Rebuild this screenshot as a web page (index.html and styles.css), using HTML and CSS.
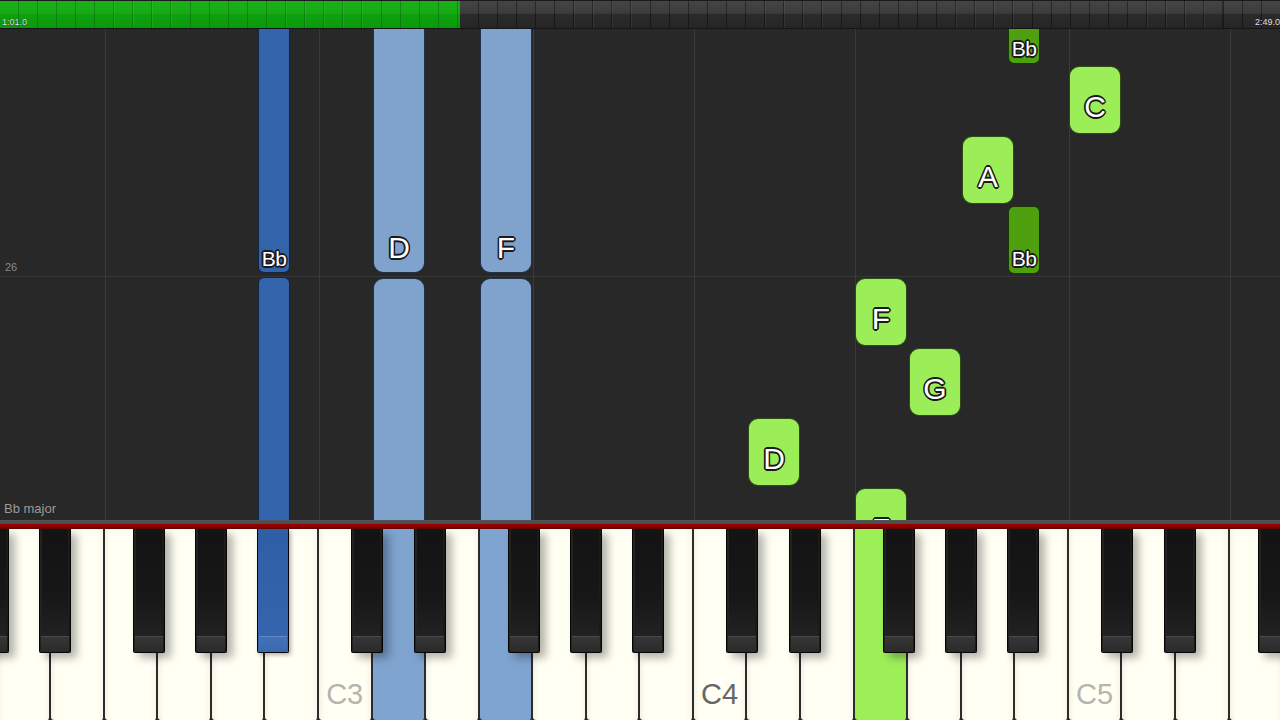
FILE: index.html
```html
<!DOCTYPE html>
<html>
<head>
<meta charset="utf-8">
<link rel="stylesheet" href="styles.css">
</head>
<body>
<div class="app">
  <div class="timeline">
    <div class="progress"></div>
    <div class="rest"></div>
    <div class="times"><span class="time">1:01.0</span><span class="time end">2:49.0</span></div>
  </div>

  <div class="roll">
    <div class="vline" style="left:105px"></div>
    <div class="vline" style="left:319px"></div>
    <div class="vline" style="left:533px"></div>
    <div class="vline" style="left:694px"></div>
    <div class="vline" style="left:855px"></div>
    <div class="vline" style="left:1069px"></div>
    <div class="vline" style="left:1230px"></div>
    <div class="hline"></div>
    <span class="measure">26</span>
    <span class="keysig">Bb major</span>

    <div class="note black lh blue-dark" style="left:258px;top:-10px;height:254px"><span>Bb</span></div>
    <div class="note black lh blue-dark" style="left:258px;top:248px;height:262px"></div>
    <div class="note white lh blue-light" style="left:373px;top:-10px;height:254px"><span>D</span></div>
    <div class="note white lh blue-light" style="left:373px;top:249px;height:262px"></div>
    <div class="note white lh blue-light" style="left:480px;top:-10px;height:254px"><span>F</span></div>
    <div class="note white lh blue-light" style="left:480px;top:249px;height:262px"></div>

    <div class="note white rh" style="left:855px;top:459px;height:68px"><span>F</span></div>
    <div class="note white rh" style="left:748px;top:389px;height:68px"><span>D</span></div>
    <div class="note white rh" style="left:909px;top:319px;height:68px"><span>G</span></div>
    <div class="note white rh" style="left:855px;top:249px;height:68px"><span>F</span></div>
    <div class="note black rh dark" style="left:1008px;top:177px;height:68px"><span>Bb</span></div>
    <div class="note white rh" style="left:962px;top:107px;height:68px"><span>A</span></div>
    <div class="note white rh" style="left:1069px;top:37px;height:68px"><span>C</span></div>
    <div class="note black rh dark" style="left:1008px;top:-33px;height:68px"><span>Bb</span></div>
  </div>

  <div class="divider"></div>

  <div class="keyboard">
    <div class="whites">
      <div class="wk"><div class="bk cs"></div></div>
      <div class="wk"><div class="bk ds"></div></div>
      <div class="wk"></div>
      <div class="wk"><div class="bk fs"></div></div>
      <div class="wk"><div class="bk gs"></div></div>
      <div class="wk"><div class="bk as pressed-blue"></div></div>
      <div class="wk"></div>

      <div class="wk"><div class="bk cs"></div><span class="clabel light">C3</span></div>
      <div class="wk pressed-lightblue"><div class="bk ds"></div></div>
      <div class="wk"></div>
      <div class="wk pressed-lightblue"><div class="bk fs"></div></div>
      <div class="wk"><div class="bk gs"></div></div>
      <div class="wk"><div class="bk as"></div></div>
      <div class="wk"></div>

      <div class="wk"><div class="bk cs"></div><span class="clabel">C4</span></div>
      <div class="wk"><div class="bk ds"></div></div>
      <div class="wk"></div>
      <div class="wk pressed-green"><div class="bk fs"></div></div>
      <div class="wk"><div class="bk gs"></div></div>
      <div class="wk"><div class="bk as"></div></div>
      <div class="wk"></div>

      <div class="wk"><div class="bk cs"></div><span class="clabel light">C5</span></div>
      <div class="wk"><div class="bk ds"></div></div>
      <div class="wk"></div>
      <div class="wk"><div class="bk fs"></div></div>
    </div>
  </div>
</div>
</body>
</html>
```

FILE: styles.css
```css
* { box-sizing: border-box; }
html, body { margin: 0; padding: 0; background: #272727; }
body { font-family: "Liberation Sans", Arial, sans-serif; }

.app {
  width: 1280px;
  height: 720px;
  overflow: hidden;
  display: flex;
  flex-direction: column;
  background: #272727;
}

/* ---------- timeline ---------- */
.timeline {
  position: relative;
  height: 29px;
  flex: none;
  display: flex;
  border-top: 1px solid #1a1a1a;
  border-bottom: 1px solid #151515;
}
.progress {
  width: 460px;
  flex: none;
  background:
    repeating-linear-gradient(to right, transparent 0 17.6px, rgba(0, 60, 0, 0.3) 17.6px 18.6px, rgba(120, 220, 120, 0.15) 18.6px 19.1px),
    linear-gradient(to bottom, #19b019 0, #16aa16 45%, #0ea00e 50%, #0b9a0b 100%);
}
.rest {
  flex: 1;
  background:
    repeating-linear-gradient(to right, transparent 0 17.6px, rgba(0, 0, 0, 0.4) 17.6px 18.6px, rgba(255, 255, 255, 0.06) 18.6px 19.1px),
    linear-gradient(to bottom, #454545 0, #3c3c3c 45%, #2b2b2b 50%, #262626 100%);
}
.times {
  position: absolute;
  left: 2px;
  right: 0;
  bottom: 1px;
  display: flex;
  justify-content: space-between;
  font-size: 9px;
  line-height: 10px;
  color: #e6e6e6;
  text-shadow: 0 0 1px #000;
}

/* ---------- roll ---------- */
.roll {
  position: relative;
  flex: none;
  height: 491px;
  overflow: hidden;
  background: #282828;
}
.vline {
  position: absolute;
  top: 0;
  bottom: 0;
  width: 1px;
  background: #3a3a3a;
}
.hline {
  position: absolute;
  left: 0;
  right: 0;
  top: 247px;
  height: 1px;
  background: #363636;
}
.measure {
  position: absolute;
  left: 5px;
  top: 232px;
  font-size: 11px;
  color: #8a8a8a;
}
.keysig {
  position: absolute;
  left: 4px;
  bottom: 4px;
  font-size: 13px;
  color: #9a9a9a;
}

.note {
  position: absolute;
  display: flex;
  flex-direction: column;
  justify-content: flex-end;
  align-items: center;
  border: 1px solid rgba(10, 20, 5, 0.75);
  color: #fff;
  line-height: 1;
  text-shadow:
    -1.6px 0 #1a1a1a, 1.6px 0 #1a1a1a, 0 -1.6px #1a1a1a, 0 1.6px #1a1a1a,
    -1.1px -1.1px #1a1a1a, 1.1px -1.1px #1a1a1a, -1.1px 1.1px #1a1a1a, 1.1px 1.1px #1a1a1a;
}
.note.white {
  width: 52px;
  border-radius: 10px;
  font-size: 30px;
  padding-bottom: 11px;
}
.note.black {
  width: 32px;
  border-radius: 6px;
  font-size: 21px;
  padding-bottom: 4px;
  letter-spacing: -0.5px;
}
.note.rh { background: #9cee58; }
.note.rh.dark { background: #4fa00f; }
.note.blue-dark { background: #3363aa; border-color: rgba(10, 20, 40, 0.8); }
.note.blue-light { background: #7fa3cd; border-color: rgba(10, 20, 40, 0.8); }
.note.lh.white { padding-bottom: 9px; }
.note.lh.black { padding-bottom: 3px; }

/* ---------- divider ---------- */
.divider {
  flex: none;
  height: 9px;
  background: linear-gradient(to bottom, #555 0, #4a4a4a 4px, #9a0000 4px, #8a0000 7px, #5a0000 9px);
}

/* ---------- keyboard ---------- */
.keyboard {
  position: relative;
  flex: 1;
  overflow: hidden;
  background: #222;
}
.whites {
  display: flex;
  height: 100%;
  margin-left: -56px;
}
.wk {
  position: relative;
  flex: none;
  width: 53.571px;
  height: 100%;
  display: flex;
  flex-direction: column;
  justify-content: flex-end;
  align-items: center;
  padding-bottom: 11px;
  background: linear-gradient(to right, #f3f3e6 0, #fffff3 12%, #fffff3 88%, #f6f6ea 100%);
  border-right: 2px solid #2b2b2b;
  border-radius: 0 0 3px 3px;
}
.wk.pressed-lightblue { background: #7fa4cf; }
.wk.pressed-green { background: #9def58; }

.clabel {
  font-size: 29px;
  line-height: 1;
  color: #666;
}
.clabel.light { color: #b4b4b0; }

.bk {
  position: absolute;
  top: 0;
  z-index: 2;
  width: 32px;
  height: 124px;
  border: 1px solid #050505;
  border-top: none;
  border-radius: 0 0 2px 2px;
  background: linear-gradient(to bottom, #131313 0, #171717 55%, #262626 100%);
  box-shadow: 6px 5px 8px rgba(0, 0, 0, 0.3), inset 2px 0 0 #222, inset -2px 0 0 #1b1b1b;
}
.bk::after {
  content: "";
  position: absolute;
  left: 1px;
  right: 1px;
  bottom: 0;
  height: 15px;
  border-top: 1px solid #4a4a4a;
  background: linear-gradient(to bottom, #363636, #2a2a2a);
  border-radius: 0 0 2px 2px;
}
.bk.cs { left: 32.5px; }
.bk.ds { left: 41.5px; }
.bk.fs { left: 28.8px; }
.bk.gs { left: 37.2px; }
.bk.as { left: 45.6px; }

.bk.pressed-blue {
  background: linear-gradient(to bottom, #2f5ea5, #3566ae);
  box-shadow: 2px 2px 4px rgba(0, 0, 0, 0.3);
}
.bk.pressed-blue::after {
  border-top: 1px solid #5f88c4;
  background: linear-gradient(to bottom, #4372b9, #3a69b1);
}
```
